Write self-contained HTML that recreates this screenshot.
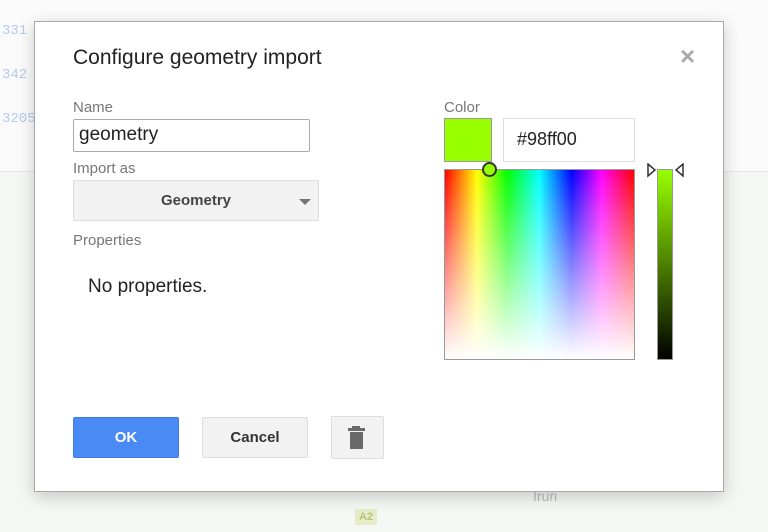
<!DOCTYPE html>
<html><head><style>
*{margin:0;padding:0;box-sizing:border-box}
body{width:768px;height:532px;overflow:hidden;position:relative;background:#f4f7f3;font-family:"Liberation Sans",sans-serif}
.top{position:absolute;left:0;top:0;width:768px;height:172px;background:#fbfbfb;border-bottom:1px solid #e6e6e6}
.num{position:absolute;left:2px;color:#b5c8ee;font-family:"Liberation Mono",monospace;font-size:14px}
.dlg{position:absolute;left:34px;top:21px;width:690px;height:471px;background:#fff;border:1px solid #a9a9a9;box-shadow:0 4px 16px rgba(0,0,0,.2)}
.a{position:absolute}
.lbl{color:#777;font-size:15px}
</style></head><body>
<div class="top"></div>
<div class="num" style="top:23px">331</div>
<div class="num" style="top:67px">342</div>
<div class="num" style="top:111px">3205</div>
<div class="a" style="left:355px;top:509px;width:22px;height:16px;background:#e7ecc8;color:#b9c27a;font-size:11px;font-weight:bold;text-align:center;line-height:16px">A2</div>
<div class="a" style="left:533px;top:488px;color:#bbb;font-size:14px">Iruri</div>
<div class="dlg">
<div class="a" style="left:38px;top:24px;font-size:21px;color:#222">Configure geometry import</div>
<div class="a" style="left:645px;top:19px;font-size:26px;color:#aaa;font-weight:bold">×</div>
<div class="a lbl" style="left:38px;top:77px">Name</div>
<div class="a" style="left:38px;top:97px;width:237px;height:33px;border:1px solid #aaa;border-radius:2px;font-size:19px;color:#222;padding:4px 5px">geometry</div>
<div class="a lbl" style="left:38px;top:138px">Import as</div>
<div class="a" style="left:38px;top:158px;width:246px;height:41px;background:#f2f2f2;border:1px solid #ddd;border-radius:2px;font-size:15px;font-weight:bold;color:#444;text-align:center;line-height:40px">Geometry</div>
<div class="a" style="left:264px;top:177px;width:0;height:0;border-left:6px solid transparent;border-right:6px solid transparent;border-top:6px solid #777"></div>
<div class="a lbl" style="left:38px;top:210px">Properties</div>
<div class="a" style="left:53px;top:254px;font-size:19px;color:#222">No properties.</div>
<div class="a lbl" style="left:409px;top:77px">Color</div>
<div class="a" style="left:409px;top:96px;width:48px;height:44px;background:#98ff00;border:1px solid #999"></div>
<div class="a" style="left:468px;top:96px;width:132px;height:44px;border:1px solid #ddd;font-size:18px;color:#222;padding:10px 13px">#98ff00</div>
<div class="a" style="left:409px;top:147px;width:191px;height:191px;border:1px solid #999;background:linear-gradient(to bottom,rgba(255,255,255,0),#fff),linear-gradient(to right,#f00,#ff0 17%,#0f0 33%,#0ff 50%,#00f 67%,#f0f 83%,#f00)"></div>
<div class="a" style="left:447px;top:140px;width:15px;height:15px;border:2px solid #333;border-radius:50%;background:#98ff00"></div>
<div class="a" style="left:622px;top:147px;width:16px;height:191px;border:1px solid #999;background:linear-gradient(#98ff00,#000)"></div>
<svg class="a" style="left:612px;top:141px" width="38" height="16"><path d="M1 1 L8 7 L1 13 Z" fill="#fff" stroke="#333" stroke-width="1.5"/><path d="M36 1 L29 7 L36 13 Z" fill="#fff" stroke="#333" stroke-width="1.5"/></svg>
<div class="a" style="left:38px;top:395px;width:106px;height:41px;background:#4a8af4;border:1px solid #3b7be8;border-radius:2px;color:#fff;font-size:15px;font-weight:bold;text-align:center;line-height:40px">OK</div>
<div class="a" style="left:167px;top:395px;width:106px;height:41px;background:#f2f2f2;border:1px solid #ddd;border-radius:2px;color:#333;font-size:15px;font-weight:bold;text-align:center;line-height:40px">Cancel</div>
<div class="a" style="left:296px;top:394px;width:53px;height:43px;background:#f2f2f2;border:1px solid #ddd;border-radius:2px"></div>
<svg class="a" style="left:312px;top:403px" width="20" height="26"><rect x="5" y="1" width="8" height="3" fill="#6a6a6a"/><rect x="1" y="3" width="17" height="3" fill="#6a6a6a"/><rect x="3" y="7" width="13" height="17" fill="#6a6a6a"/></svg>
</div>
</body></html>
